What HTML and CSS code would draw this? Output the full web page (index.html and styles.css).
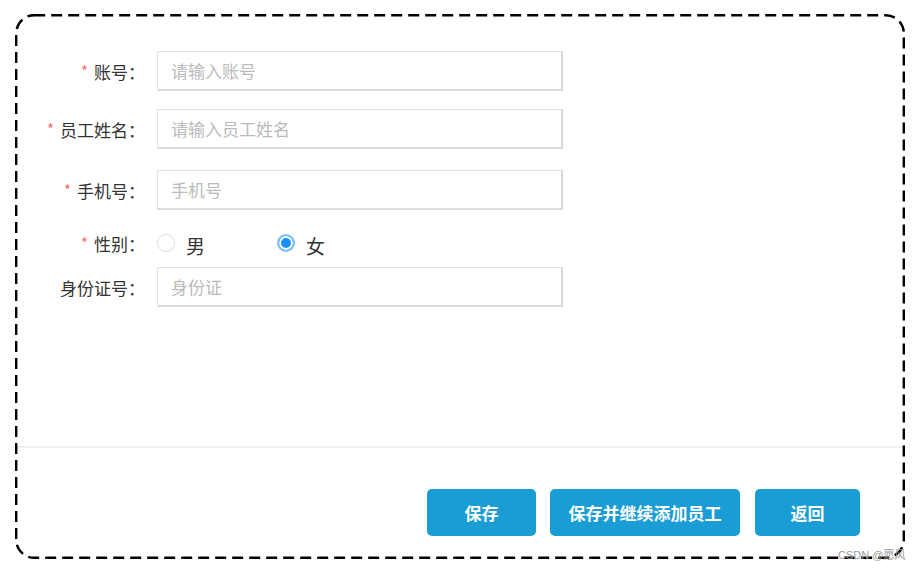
FILE: index.html
```html
<!DOCTYPE html>
<html lang="zh-CN">
<head>
    <meta charset="UTF-8">
    <meta name="viewport" content="width=device-width, initial-scale=1.0">
    <title>添加员工</title>
    <link rel="stylesheet" href="styles.css">
</head>
<body>

<div class="frame">
    <!-- borda tracejada -->
    <svg class="dash" width="890" height="545" viewBox="0 0 890 545">
        <rect x="1.2" y="1.2" width="887.6" height="542.6" rx="18" ry="18"
              fill="none" stroke="#000" stroke-width="2.4" stroke-dasharray="11 6"/>
    </svg>
    <div class="form-area">
        <div class="row row-1">
            <label class="label"><span class="star">*</span>账号：</label>
            <div class="input"><span class="ph">请输入账号</span></div>
        </div>
        <div class="row row-2">
            <label class="label"><span class="star">*</span>员工姓名：</label>
            <div class="input"><span class="ph">请输入员工姓名</span></div>
        </div>
        <div class="row row-3">
            <label class="label"><span class="star">*</span>手机号：</label>
            <div class="input"><span class="ph">手机号</span></div>
        </div>
        <div class="row row-radio">
            <label class="label"><span class="star">*</span>性别：</label>
            <div class="radios">
                <span class="radio"><span class="dot"></span>男</span>
                <span class="radio checked"><span class="dot"></span>女</span>
            </div>
        </div>
        <div class="row row-4">
            <label class="label">身份证号：</label>
            <div class="input"><span class="ph">身份证</span></div>
        </div>
    </div>
    <div class="footer">
        <button class="btn btn-save">保存</button>
        <button class="btn btn-more">保存并继续添加员工</button>
        <button class="btn btn-back">返回</button>
    </div>
</div>

<div class="mark">CSDN @愿风</div>

</body>
</html>
```

FILE: styles.css
```css
body {
    margin: 0;
    padding: 0;
    background: #fff;
    font-family: "Noto Sans CJK SC", "Noto Sans", sans-serif;
    color: #333;
}
.frame {
    position: relative;
    margin: 14px 0 0 15px;
    width: 890px;
    height: 545px;
    box-sizing: border-box;
    padding: 2px;
    display: flex;
    flex-direction: column;
}
.dash {
    position: absolute;
    top: 0;
    left: 0;
    pointer-events: none;
}
.form-area {
    height: 432px;
    box-sizing: border-box;
    padding-top: 35px;
    border-bottom: 2px solid #f0f0f0;
}
.row {
    display: flex;
    align-items: center;
}
.row-2 { margin-top: 18px; }
.row-3 { margin-top: 21px; }
.row-radio { margin-top: 24px; height: 18px; }
.row-4 { margin-top: 15px; }
.label {
    width: 128px;
    margin-right: 12px;
    text-align: right;
    font-size: 17px;
    color: #333;
    white-space: nowrap;
}
.star {
    color: #f56c6c;
    font-size: 15px;
    margin-right: 6px;
    position: relative;
    top: -2px;
}
.input {
    width: 406px;
    height: 40px;
    box-sizing: border-box;
    border: 1px solid #e2e2e2;
    border-right: 2px solid #d8d8d8;
    border-bottom: 2px solid #dcdcdc;
    display: flex;
    align-items: center;
    padding-left: 13px;
}
.ph {
    font-size: 17px;
    color: #bbb;
}
.radios {
    display: flex;
    align-items: center;
}
.radio {
    display: flex;
    align-items: center;
    width: 120px;
    font-size: 19px;
    color: #333;
    position: relative;
    top: 2px;
}
.dot {
    width: 18px;
    height: 18px;
    box-sizing: border-box;
    border: 1px solid #dcdcdc;
    border-radius: 50%;
    margin-right: 11px;
    position: relative;
    top: -2px;
}
.radio.checked .dot {
    border: 2px solid #7fbfff;
    background: #1890ff;
    box-shadow: inset 0 0 0 2px #fff;
}
.footer {
    flex: 1;
    display: flex;
    justify-content: flex-end;
    align-items: flex-start;
    padding: 41px 43px 0 0;
    gap: 14px;
}
.btn {
    height: 47px;
    border: none;
    border-radius: 5px;
    background: #1a9cd5;
    color: #fff;
    font-family: "Noto Sans CJK SC", sans-serif;
    font-size: 17px;
    font-weight: bold;
    cursor: pointer;
}
.btn-save { width: 109px; }
.btn-more { width: 190px; }
.btn-back { width: 105px; margin-left: 1px; }
.mark {
    position: absolute;
    left: 838px;
    top: 546px;
    font-size: 11px;
    color: #999;
    font-family: "Liberation Sans", "Noto Sans CJK SC", sans-serif;
}
```
